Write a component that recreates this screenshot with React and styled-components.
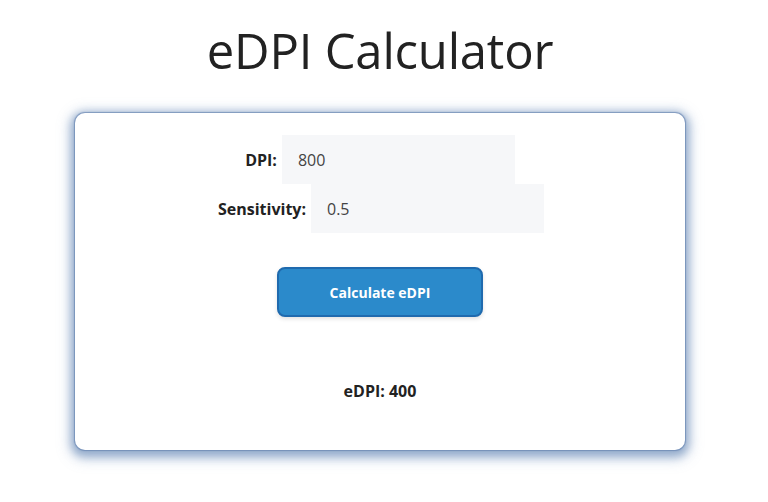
import styled, { createGlobalStyle } from 'styled-components'
import { useState } from 'react'

const Global = createGlobalStyle`
  body {
    margin: 0;
    background: #ffffff;
    font-family: 'Open Sans', 'Noto Sans', sans-serif;
    color: #222;
  }
`

const Page = styled.div`
  display: flex;
  flex-direction: column;
  align-items: center;
  width: 760px;
  padding: 20px 0 40px;
`

const Title = styled.h1`
  margin: 0 0 33px;
  font-size: 49px;
  font-weight: 400;
  line-height: 60px;
  color: #222;
  letter-spacing: -0.2px;
`

const Card = styled.div`
  width: 610px;
  height: 337px;
  box-sizing: border-box;
  background: #fff;
  border-radius: 10px;
  box-shadow: 0 0 1px 1px rgba(100, 130, 175, 0.7), 0 3px 8px 4px rgba(90, 125, 175, 0.55),
    0 4px 14px 6px rgba(120, 150, 195, 0.25);
  display: flex;
  flex-direction: column;
  align-items: center;
  padding-top: 22px;
`

const Row = styled.div`
  display: flex;
  align-items: center;
  gap: 5px;
  margin-left: ${p => p.$shift}px;
`

const Label = styled.label`
  font-weight: 700;
  font-size: 16px;
  color: #222;
`

const Input = styled.input`
  width: 233px;
  height: 49px;
  box-sizing: border-box;
  border: none;
  background: #f6f7f9;
  padding: 0 16px;
  font-family: inherit;
  font-size: 16px;
  color: #444;
  outline: none;
`

const Button = styled.button`
  margin-top: 34px;
  width: 206px;
  height: 50px;
  border: 2px solid #1f6aae;
  border-radius: 8px;
  background: #2b8acb;
  color: #fff;
  font-family: inherit;
  font-weight: 700;
  font-size: 14px;
  box-shadow: 0 2px 4px rgba(0, 0, 0, 0.12);
  cursor: pointer;
`

const Result = styled.div`
  margin-top: 63px;
  font-weight: 700;
  font-size: 16px;
  color: #222;
`

export default function App() {
  const [dpi, setDpi] = useState('800')
  const [sens, setSens] = useState('0.5')
  const [edpi, setEdpi] = useState(400)

  return (
    <Page>
      <Global />
      <Title>eDPI Calculator</Title>
      <Card>
        <Row $shift={0}>
          <Label>DPI:</Label>
          <Input value={dpi} onChange={e => setDpi(e.target.value)} />
        </Row>
        <Row $shift={2}>
          <Label>Sensitivity:</Label>
          <Input value={sens} onChange={e => setSens(e.target.value)} />
        </Row>
        <Button onClick={() => setEdpi(Number(dpi) * Number(sens))}>Calculate eDPI</Button>
        <Result>eDPI: {edpi}</Result>
      </Card>
    </Page>
  )
}
